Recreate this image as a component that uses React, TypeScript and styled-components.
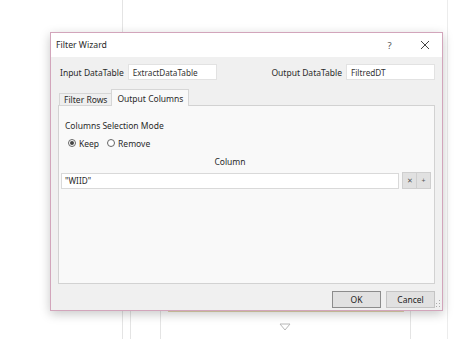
import React from "react";
import styled, { createGlobalStyle } from "styled-components";

const Global = createGlobalStyle`
  html, body { margin: 0; padding: 0; background: #ffffff; }
  body { font-family: "Noto Sans", "Open Sans", sans-serif; color: #2a2a2a; }
  * { box-sizing: border-box; }
`;

const Desktop = styled.div`
  position: relative;
  width: 474px;
  height: 339px;
  overflow: hidden;
  background: #ffffff;
`;

const VLine = styled.div<{ $x: number; $top: number; $h: number; $c?: string }>`
  position: absolute;
  left: ${(p) => p.$x}px;
  top: ${(p) => p.$top}px;
  width: 1px;
  height: ${(p) => p.$h}px;
  background: ${(p) => p.$c ?? "#e4e4e4"};
`;

const Sequence = styled.div`
  position: absolute;
  left: 168px;
  top: 240px;
  width: 236px;
  height: 72px;
  border: 1px solid #e6dcc0;
  border-bottom: 2px solid #e3d6b0;
  background: #fbfbf8;
`;

const Arrow = styled.svg`
  position: absolute;
  left: 279px;
  top: 323px;
`;

const Window = styled.div`
  position: absolute;
  left: 50px;
  top: 32px;
  width: 393px;
  height: 279px;
  border: 1px solid #d2a5bb;
  background: #f0f0f0;
  box-shadow: 0 3px 10px rgba(0, 0, 0, 0.22);
  display: flex;
  flex-direction: column;
  font-size: 8.5px;
`;

const TitleBar = styled.div`
  height: 24px;
  background: #ffffff;
  display: flex;
  align-items: center;
  padding-left: 5px;
  font-size: 8.7px;
  color: #2a2a2a;
`;

const Title = styled.span`
  flex: 1;
`;

const TitleButton = styled.span<{ $w: number }>`
  width: ${(p) => p.$w}px;
  display: flex;
  justify-content: center;
  align-items: center;
  color: #555;
  font-size: 9.5px;
`;

const Body = styled.div`
  flex: 1;
  display: flex;
  flex-direction: column;
  padding: 6px 7px 0 6px;
`;

const TopRow = styled.div`
  display: flex;
  align-items: center;
  height: 16px;
  margin-top: 1px;
  padding-left: 3px;
`;

const Label = styled.span`
  margin-right: 4px;
  white-space: nowrap;
`;

const Spacer = styled.div`
  flex: 1;
`;

const Field = styled.div<{ $w: number }>`
  width: ${(p) => p.$w}px;
  height: 16px;
  background: #ffffff;
  border: 1px solid #e2e2e2;
  display: flex;
  align-items: center;
  padding-left: 4px;
  font-size: 8.2px;
  color: #333;
`;

const TabStrip = styled.div`
  display: flex;
  align-items: flex-end;
  height: 17px;
  margin-top: 9px;
  padding-left: 2px;
`;

const Tab = styled.div<{ $active?: boolean }>`
  height: ${(p) => (p.$active ? 17 : 13)}px;
  padding: 0 ${(p) => (p.$active ? 5 : 4)}px;
  display: flex;
  align-items: center;
  border: 1px solid #d6d6d6;
  border-bottom: ${(p) => (p.$active ? "none" : "1px solid #d6d6d6")};
  background: ${(p) => (p.$active ? "#f9f9f9" : "#efefef")};
  margin-left: ${(p) => (p.$active ? -1 : 0)}px;
  position: relative;
  z-index: ${(p) => (p.$active ? 2 : 1)};
  white-space: nowrap;
`;

const Panel = styled.div`
  height: 179px;
  margin-top: -1px;
  margin-left: 1px;
  border: 1px solid #d2d2d2;
  background: #f9f9f9;
  display: flex;
  flex-direction: column;
  padding: 0 3px 0 2px;
`;

const Heading = styled.div`
  margin-top: 12px;
  padding-left: 4px;
  height: 14px;
  display: flex;
  align-items: center;
`;

const RadioRow = styled.div`
  display: flex;
  align-items: center;
  gap: 8px;
  margin-top: 4px;
  padding-left: 7px;
  height: 14px;
`;

const RadioItem = styled.label`
  display: flex;
  align-items: center;
  gap: 3px;
`;

const Radio = styled.span<{ $checked?: boolean }>`
  width: 8px;
  height: 8px;
  border-radius: 50%;
  border: 1px solid #666;
  background: #fff;
  display: flex;
  align-items: center;
  justify-content: center;
  &::after {
    content: "";
    width: 4px;
    height: 4px;
    border-radius: 50%;
    background: ${(p) => (p.$checked ? "#444" : "transparent")};
  }
`;

const ColumnHeader = styled.div`
  width: 338px;
  text-align: center;
  margin-top: 5px;
  height: 14px;
  line-height: 14px;
`;

const ColumnRow = styled.div`
  display: flex;
  align-items: center;
  margin-top: 3px;
`;

const ColumnInput = styled.div`
  width: 339px;
  height: 16px;
  background: #ffffff;
  border: 1px solid #d9d9d9;
  display: flex;
  align-items: center;
  padding-left: 3px;
  font-size: 8.2px;
  margin-right: 3px;
`;

const SmallButton = styled.div`
  width: 15px;
  height: 17px;
  background: #e1e1e1;
  border: 1px solid #cfcfcf;
  display: flex;
  align-items: center;
  justify-content: center;
  color: #555;
  font-size: 7px;
  & + & {
    margin-left: -1px;
  }
`;

const Footer = styled.div`
  flex: 1;
  display: flex;
  justify-content: flex-end;
  align-items: flex-start;
  gap: 5px;
  padding-top: 7px;
  position: relative;
`;

const Button = styled.div<{ $default?: boolean }>`
  width: 49px;
  height: 17px;
  background: #e1e1e1;
  border: 1px solid ${(p) => (p.$default ? "#8c8c8c" : "#c4c4c4")};
  display: flex;
  align-items: center;
  justify-content: center;
  color: #222;
`;

const Grip = styled.svg`
  position: absolute;
  right: -6px;
  bottom: 1px;
`;

export default function App() {
  return (
    <Desktop>
      <Global />
      <VLine $x={122} $top={0} $h={40} />
      <VLine $x={447} $top={0} $h={339} $c="#ececec" />
      <VLine $x={122} $top={300} $h={39} />
      <VLine $x={130} $top={300} $h={39} />
      <VLine $x={160} $top={300} $h={39} />
      <VLine $x={410} $top={300} $h={39} />
      <Sequence />
      <Arrow width="12" height="8" viewBox="0 0 12 8">
        <path d="M1 1 L11 1 L6 7 Z" fill="none" stroke="#b8b8b8" strokeWidth="1" />
      </Arrow>
      <Window>
        <TitleBar>
          <Title>Filter Wizard</Title>
          <TitleButton $w={35}>?</TitleButton>
          <TitleButton $w={35}>
            <svg width="10" height="10" viewBox="0 0 10 10">
              <path d="M1 1 L9 9 M9 1 L1 9" stroke="#444" strokeWidth="1" />
            </svg>
          </TitleButton>
        </TitleBar>
        <Body>
          <TopRow>
            <Label>Input DataTable</Label>
            <Field $w={89}>ExtractDataTable</Field>
            <Spacer />
            <Label>Output DataTable</Label>
            <Field $w={89}>FiltredDT</Field>
          </TopRow>
          <TabStrip>
            <Tab>Filter Rows</Tab>
            <Tab $active>Output Columns</Tab>
          </TabStrip>
          <Panel>
            <Heading>Columns Selection Mode</Heading>
            <RadioRow>
              <RadioItem>
                <Radio $checked />
                Keep
              </RadioItem>
              <RadioItem>
                <Radio />
                Remove
              </RadioItem>
            </RadioRow>
            <ColumnHeader>Column</ColumnHeader>
            <ColumnRow>
              <ColumnInput>"WIID"</ColumnInput>
              <SmallButton>✕</SmallButton>
              <SmallButton>+</SmallButton>
            </ColumnRow>
          </Panel>
          <Footer>
            <Button $default>OK</Button>
            <Button>Cancel</Button>
            <Grip width="6" height="10" viewBox="0 0 6 10">
              <rect x="4" y="1" width="1" height="1" fill="#aaa" />
              <rect x="4" y="4" width="1" height="1" fill="#aaa" />
              <rect x="1" y="4" width="1" height="1" fill="#aaa" />
              <rect x="4" y="7" width="1" height="1" fill="#aaa" />
              <rect x="1" y="7" width="1" height="1" fill="#aaa" />
            </Grip>
          </Footer>
        </Body>
      </Window>
    </Desktop>
  );
}
